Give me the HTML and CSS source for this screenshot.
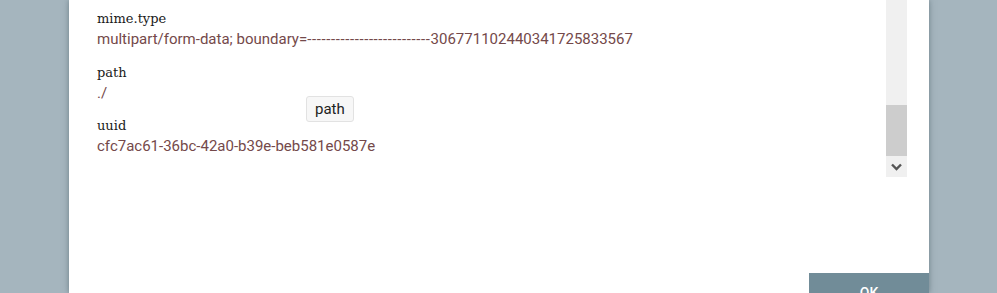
FILE: index.html
```html
<!DOCTYPE html>
<html>
<head>
<meta charset="utf-8">
<link rel="stylesheet" href="styles.css">
</head>
<body>
<div class="dialog">
  <div class="body">
    <div class="scroll">
      <div class="list">
        <div class="item">
          <div class="label">mime.type</div>
          <div class="value">multipart/form-data; boundary=<span class="dashes">--------------------------</span>306771102440341725833567</div>
        </div>
        <div class="item">
          <div class="label">path</div>
          <div class="value">./</div>
        </div>
        <div class="item">
          <div class="label">uuid</div>
          <div class="value">cfc7ac61-36bc-42a0-b39e-beb581e0587e</div>
        </div>
      </div>
      <div class="scrollbar">
        <div class="track"></div>
        <div class="thumb"></div>
        <div class="arrow">
          <svg width="11" height="8" viewBox="0 0 11 8"><path d="M1 1.5 L5.5 6 L10 1.5" fill="none" stroke="#555" stroke-width="2.4"/></svg>
        </div>
      </div>
    </div>
    <div class="tooltip">path</div>
  </div>
  <div class="footer">
    <button class="ok">OK</button>
  </div>
</div>
</body>
</html>
```

FILE: styles.css
```css
html, body {
  margin: 0;
  padding: 0;
  height: 100%;
  overflow: hidden;
}
body {
  background: #a5b5be;
}
.dialog {
  margin-left: 69px;
  width: 860px;
  height: 293px;
  background: #fff;
  box-shadow: 0 0 6px rgba(60, 80, 90, 0.55);
  display: flex;
  flex-direction: column;
  position: relative;
  overflow: hidden;
}
.body {
  position: relative;
  flex: 0 0 273px;
  height: 273px;
}
.scroll {
  display: flex;
  height: 177px;
  padding-right: 22px;
}
.list {
  flex: 1;
  padding: 9px 0 0 28px;
  display: flex;
  flex-direction: column;
  gap: 13.5px;
}
.label {
  font-family: "DejaVu Serif", serif;
  font-size: 13px;
  line-height: 20px;
  color: #1a1a1a;
}
.value {
  font-family: Roboto, sans-serif;
  font-size: 15px;
  line-height: 20px;
  color: #74494a;
}
.dashes {
  letter-spacing: 0.6px;
}
.scrollbar {
  width: 21px;
  height: 177px;
  background: #f0f0f0;
  display: flex;
  flex-direction: column;
}
.track {
  flex: 0 0 105px;
}
.thumb {
  flex: 0 0 51px;
  background: #cdcdcd;
}
.arrow {
  flex: 1;
  display: flex;
  align-items: center;
  justify-content: center;
}
.arrow svg {
  display: block;
}
.tooltip {
  position: absolute;
  left: 237px;
  top: 96px;
  height: 24px;
  padding: 0 8px;
  background: #f7f7f7;
  border: 1px solid #e2e2e2;
  border-radius: 3px;
  font-family: Roboto, sans-serif;
  font-size: 15px;
  line-height: 24px;
  color: #222;
}
.footer {
  display: flex;
  justify-content: flex-end;
}
.ok {
  width: 120px;
  height: 40px;
  border: 0;
  margin: 0;
  background: #718c98;
  color: #fff;
  font-family: Roboto, sans-serif;
  font-weight: 500;
  font-size: 14px;
  padding: 12px 0 0;
  display: flex;
  justify-content: center;
}
```
